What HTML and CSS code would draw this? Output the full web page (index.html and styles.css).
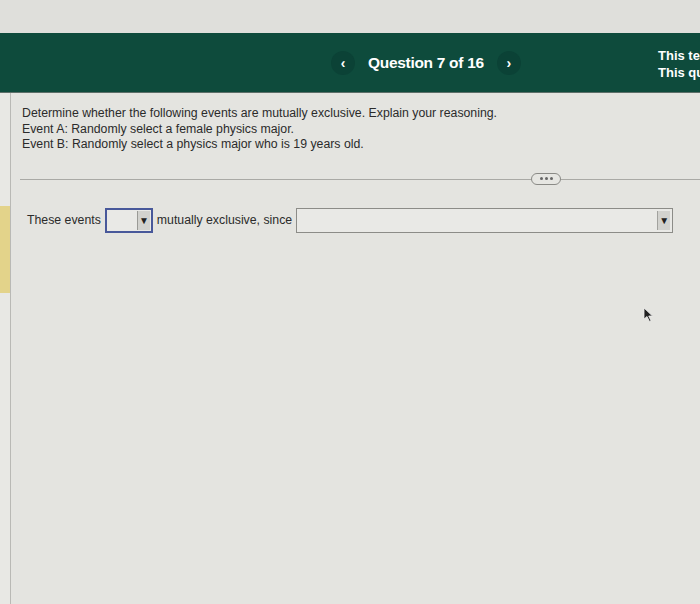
FILE: index.html
```html
<!DOCTYPE html>
<html>
<head>
<meta charset="utf-8">
<link rel="stylesheet" href="styles.css">
</head>
<body>
<div class="topbar"></div>
<header class="header">
  <div class="nav">
    <span class="navbtn">&#8249;</span>
    <span class="qtitle">Question 7 of 16</span>
    <span class="navbtn">&#8250;</span>
  </div>
  <div class="notice">
    <div>This test</div>
    <div>This question</div>
  </div>
</header>
<div class="main">
  <aside class="side"><div class="mark"></div></aside>
  <section class="content">
    <div class="question">
      <p>Determine whether the following events are mutually exclusive. Explain your reasoning.</p>
      <p>Event A: Randomly select a female physics major.</p>
      <p>Event B: Randomly select a physics major who is 19 years old.</p>
    </div>
    <div class="divider"><span class="more"><i></i><i></i><i></i></span></div>
    <div class="answer">
      <span class="lbl1">These events</span>
      <span class="sel small"><span class="arrow">&#9660;</span></span>
      <span class="lbl2">mutually exclusive, since</span>
      <span class="sel big"><span class="arrow">&#9660;</span></span>
    </div>
    <div class="cursor">
      <svg width="12" height="16" viewBox="0 0 12 16"><path d="M1 1 L1 12 L4 9.5 L6.5 14.5 L8 13.8 L5.7 9 L9.5 9 Z" fill="#222" stroke="#eee" stroke-width="0.8"/></svg>
    </div>
  </section>
</div>
</body>
</html>
```

FILE: styles.css
```css
html, body {
  margin: 0;
  padding: 0;
}
body {
  width: 700px;
  height: 604px;
  overflow: hidden;
  background: #e4e4e0;
  font-family: "Liberation Sans", Arial, sans-serif;
  color: #2a2a2a;
}
.topbar {
  height: 33px;
  background: #dfdfdb;
}
.header {
  height: 60px;
  background: #0e4b3c;
  display: flex;
  align-items: center;
  position: relative;
  border-bottom: 1px solid #5d6f69;
  box-sizing: border-box;
  overflow: hidden;
}
.nav {
  display: flex;
  align-items: center;
  margin-left: 331px;
}
.navbtn {
  width: 24px;
  height: 24px;
  border-radius: 50%;
  background: #0b4236;
  color: #fff;
  font-size: 14px;
  font-weight: bold;
  display: flex;
  align-items: center;
  justify-content: center;
  line-height: 1;
}
.qtitle {
  color: #fff;
  font-weight: bold;
  font-size: 15.5px;
  margin: 0 13px 0 13px;
  letter-spacing: -0.3px;
}
.notice {
  position: absolute;
  left: 658px;
  top: 14px;
  color: #fff;
  font-weight: bold;
  font-size: 13px;
  line-height: 17px;
  white-space: nowrap;
}
.main {
  display: flex;
  height: 511px;
}
.side {
  width: 10px;
  background: #e8e8e4;
  border-right: 1px solid #b9b9b5;
}
.mark {
  margin-top: 113px;
  height: 87px;
  background: #e3d38a;
}
.content {
  flex: 1;
  position: relative;
  padding-top: 13px;
}
.question {
  padding-left: 11px;
  font-size: 12.3px;
  line-height: 15.5px;
  color: #2b2b2b;
}
.question p {
  margin: 0;
}
.divider {
  margin-top: 26px;
  margin-left: 9px;
  height: 1px;
  background: #a9a9a5;
  position: relative;
}
.more {
  position: absolute;
  left: 511px;
  top: -6px;
  width: 28px;
  height: 10px;
  border: 1px solid #8a8a86;
  border-radius: 6px;
  background: #e6e6e2;
  display: flex;
  align-items: center;
  justify-content: center;
  gap: 2px;
}
.more i {
  width: 3px;
  height: 3px;
  background: #666;
  border-radius: 50%;
}
.answer {
  display: flex;
  align-items: center;
  margin-top: 28px;
  padding-left: 16px;
  font-size: 12.3px;
  color: #2b2b2b;
}
.lbl1 { margin-right: 4px; }
.lbl2 { margin: 0 4px 0 4px; }
.sel {
  display: flex;
  justify-content: flex-end;
  align-items: center;
  box-sizing: border-box;
  background: #e9e9e6;
}
.sel.small {
  width: 48px;
  height: 25px;
  border: 2px solid #48589a;
  padding: 1px;
}
.sel.small .arrow {
  height: 100%;
  width: 13px;
  background: #d2d2ce;
  border-left: 1px solid #9a9a96;
}
.sel.big {
  width: 377px;
  height: 25px;
  border: 1px solid #8c8c88;
  padding: 2px;
}
.sel.big .arrow {
  height: 100%;
  width: 13px;
  background: #d2d2ce;
  border-left: 1px solid #a2a29e;
}
.arrow {
  font-size: 10px;
  color: #222;
  display: flex;
  align-items: center;
  justify-content: center;
  box-sizing: border-box;
}
.cursor {
  position: absolute;
  left: 632px;
  top: 214px;
}
```
